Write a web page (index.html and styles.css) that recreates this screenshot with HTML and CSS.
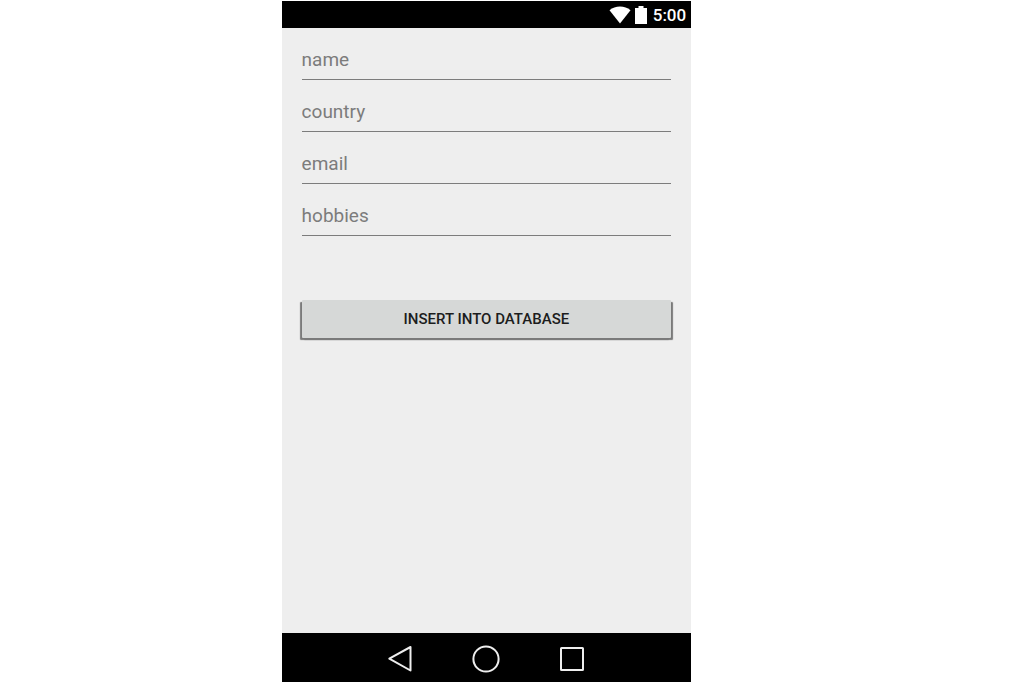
FILE: index.html
```html
<!DOCTYPE html>
<html lang="en">
<head>
<meta charset="utf-8">
<title>Insert into database</title>
<link rel="stylesheet" href="styles.css">
</head>
<body>
<div class="phone">
  <header class="status-bar">
    <svg class="wifi" viewBox="0 0 22 18" aria-hidden="true"><path d="M0.5 4.2C3.500 1.700 7 .5 11 .5s7.500 1.200 10.500 3.700L11 17.500z"/></svg>
    <svg class="battery" viewBox="0 0 12 18" aria-hidden="true"><path d="M3.500 0h5v2H12v16H0V2h3.500z"/></svg>
    <time class="clock">5:00</time>
  </header>
  <form class="form">
    <input class="field" type="text" placeholder="name" aria-label="name">
    <input class="field" type="text" placeholder="country" aria-label="country">
    <input class="field" type="email" placeholder="email" aria-label="email">
    <input class="field" type="text" placeholder="hobbies" aria-label="hobbies">
    <button class="insert" type="button">INSERT INTO DATABASE</button>
  </form>
  <nav class="nav-bar">
    <button class="nav-button" type="button" aria-label="Back"><svg viewBox="0 0 28 28"><path d="M24.500 2v23.500L3.300 13.700z"/></svg></button>
    <button class="nav-button" type="button" aria-label="Home"><svg viewBox="0 0 28 28"><circle cx="14" cy="14" r="12.600"/></svg></button>
    <button class="nav-button" type="button" aria-label="Recent apps"><svg viewBox="0 0 28 28"><rect x="3" y="3" width="22" height="22" rx="0.500"/></svg></button>
  </nav>
</div>
</body>
</html>
```
FILE: styles.css
```css
* {
  box-sizing: border-box;
}

body {
  margin: 0;
  background: #fff;
  font-family: Roboto, sans-serif;
}

.phone {
  display: flex;
  flex-direction: column;
  width: 40%;
  min-height: 100vh;
  margin-left: 27.5%;
  border-top: 1px solid #fff;
  background: #eee;
}

.status-bar {
  display: flex;
  align-items: center;
  justify-content: flex-end;
  gap: 4px;
  height: 27px;
  padding: 1px 5px 0 0;
  background: #000;
  color: #fff;
}

.wifi,
.battery {
  height: 18px;
  fill: #fff;
}

.wifi {
  width: 22px;
}

.battery {
  width: 12px;
}

.clock {
  margin-left: 2px;
  font-size: 17px;
  font-weight: 500;
  line-height: 24px;
}

.form {
  display: flex;
  flex: 1;
  flex-direction: column;
  padding: 0 20px;
}

.field {
  width: 100%;
  height: 52px;
  padding: 12px 0 0;
  border: 0;
  border-bottom: 1px solid #7c7c7c;
  border-radius: 0;
  outline: 0;
  background: transparent;
  color: #222;
  font-family: inherit;
  font-size: 19px;
}

.field::placeholder {
  color: #7c7c7c;
  opacity: 1;
}

.insert {
  height: 38px;
  margin-top: 64px;
  padding: 0;
  border: 0;
  border-radius: 1px;
  background: #d6d8d7;
  box-shadow: -2px 2px 1px #7a7a7a, 2px 2px 1px #7a7a7a;
  color: #1c1d1d;
  font-family: inherit;
  font-size: 15px;
  font-weight: 500;
}

.nav-bar {
  display: flex;
  align-items: center;
  justify-content: center;
  gap: 58px;
  height: 49px;
  padding-top: 3px;
  background: #000;
}

.nav-button {
  width: 28px;
  height: 28px;
  padding: 0;
  border: 0;
  background: none;
}

.nav-button svg {
  display: block;
  width: 28px;
  height: 28px;
  fill: none;
  stroke: #eee;
  stroke-width: 2;
  stroke-linejoin: round;
}
```
